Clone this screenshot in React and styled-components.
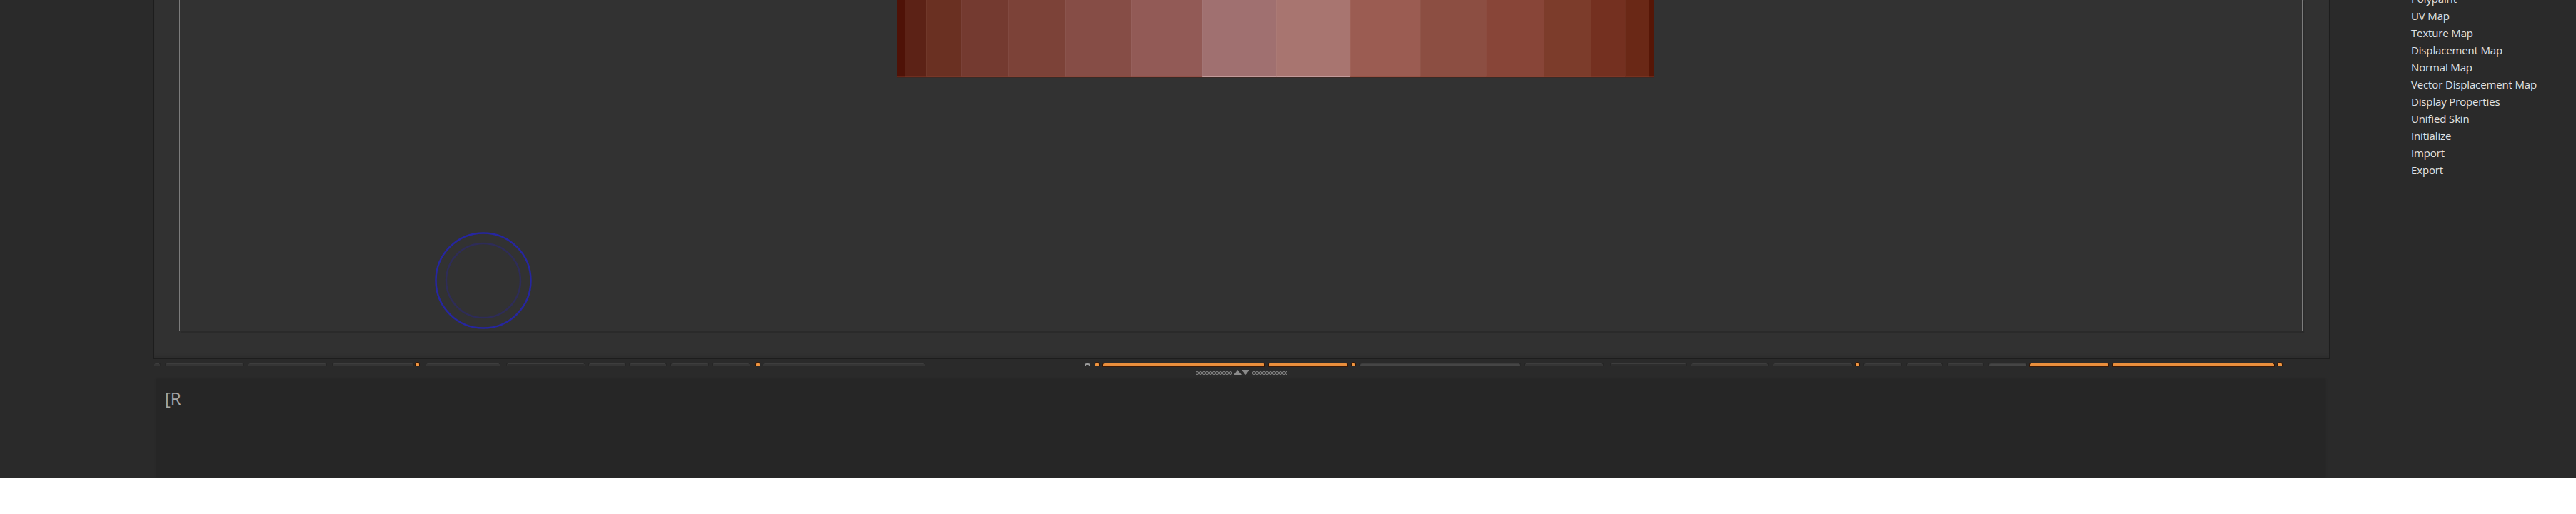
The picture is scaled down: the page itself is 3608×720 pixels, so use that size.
import React from 'react';
import styled, { createGlobalStyle } from 'styled-components';

const GlobalStyle = createGlobalStyle`
  html, body {
    margin: 0;
    padding: 0;
    background: #ffffff;
  }
  body {
    font-family: "Open Sans", "Noto Sans", "Liberation Sans", sans-serif;
  }
`;

// colour bands of the material strip, page x start / end
const bands = [
  [1256, 1267, '#4f1207'],
  [1267, 1297, '#5c2216'],
  [1297, 1346, '#6a3022'],
  [1346, 1412, '#743a30'],
  [1412, 1492, '#7c4238'],
  [1492, 1584, '#864d46'],
  [1584, 1684, '#925a56'],
  [1684, 1787, '#a07070', true],
  [1787, 1891, '#a87570', true],
  [1891, 1989, '#9b5c52'],
  [1989, 2082, '#8c4e42'],
  [2082, 2162, '#884538'],
  [2162, 2228, '#7c3c2b'],
  [2228, 2276, '#743020'],
  [2276, 2309, '#6a2816'],
  [2309, 2317, '#561606'],
];

// timeline strip under the viewport, page x start / end / kind
const segments = [
  [215, 225, 'dark'],
  [231, 342, 'dark'],
  [347, 458, 'dark'],
  [465, 580, 'dark'],
  [581, 588, 'knob'],
  [596, 701, 'dark'],
  [709, 820, 'dim'],
  [824, 877, 'dark'],
  [881, 934, 'dark'],
  [939, 993, 'dark'],
  [997, 1051, 'dark'],
  [1058, 1065, 'knob'],
  [1068, 1296, 'dark'],
  [1519, 1527, 'arrow'],
  [1533, 1540, 'knob'],
  [1544, 1772, 'orange'],
  [1776, 1888, 'orange'],
  [1892, 1899, 'knob'],
  [1904, 2130, 'light'],
  [2135, 2246, 'dark'],
  [2255, 2363, 'dim'],
  [2368, 2477, 'dark'],
  [2483, 2595, 'dark'],
  [2598, 2605, 'knob'],
  [2610, 2664, 'dark'],
  [2670, 2721, 'dark'],
  [2727, 2779, 'dark'],
  [2785, 2839, 'light'],
  [2842, 2954, 'orange'],
  [2958, 3186, 'orange'],
  [3189, 3197, 'knob'],
];

const menuItems = [
  'Polypaint',
  'UV Map',
  'Texture Map',
  'Displacement Map',
  'Normal Map',
  'Vector Displacement Map',
  'Display Properties',
  'Unified Skin',
  'Initialize',
  'Import',
  'Export',
];

export default function App() {
  let prev = 214;
  return (
    <>
      <GlobalStyle />
      <Shell>
        <LeftTray />
        <Center>
          <Viewport>
            <Frame>
              <MaterialStrip>
                {bands.map(([a, b, c, hi], i) => (
                  <Band key={i} $w={b - a} $c={c} $hi={hi} />
                ))}
              </MaterialStrip>
              <BrushCursor width="140" height="140" viewBox="0 0 140 140">
                <circle cx="70" cy="70" r="66.5" fill="none" stroke="#2626a0" strokeWidth="2.5" />
                <circle cx="70" cy="70" r="52" fill="none" stroke="#2e2c58" strokeWidth="2.5" />
              </BrushCursor>
            </Frame>
          </Viewport>
          <TimelineRow>
            <Track>
              {segments.map(([a, b, kind], i) => {
                const gap = a - prev;
                prev = b;
                if (kind === 'knob') return <Knob key={i} $gap={gap} $w={b - a} />;
                if (kind === 'arrow') return <Caret key={i} $gap={gap} $w={b - a} />;
                return <Segment key={i} $gap={gap} $w={b - a} $kind={kind} />;
              })}
            </Track>
            <Grip>
              <GripBar />
              <svg width="22" height="8" viewBox="0 0 22 8">
                <polygon points="0,7 5.5,0 11,7" fill="#8a8a8a" />
                <polygon points="11,0 22,0 16.5,7" fill="#8a8a8a" />
              </svg>
              <GripBar />
            </Grip>
          </TimelineRow>
          <NotePanel>
            <NoteText>[R</NoteText>
          </NotePanel>
        </Center>
        <RightTray>
          <MenuList>
            {menuItems.map((m) => (
              <MenuItem key={m}>{m}</MenuItem>
            ))}
          </MenuList>
        </RightTray>
      </Shell>
    </>
  );
}

const Shell = styled.div`
  width: 3608px;
  height: 669px;
  display: grid;
  grid-template-columns: 214px 3049px 1fr;
  background: #2a2a2a;
  overflow: hidden;
`;

const LeftTray = styled.div`
  background: #2a2a2a;
`;

const Center = styled.div`
  display: flex;
  flex-direction: column;
`;

const Viewport = styled.div`
  box-sizing: border-box;
  height: 503px;
  display: flex;
  padding: 0 37px 38px 36px;
  background: #313131;
  border: 1px solid #1d1d1d;
  border-top: none;
  box-shadow: inset 0 -5px 4px -3px #2b2b2b;
`;

const Frame = styled.div`
  position: relative;
  flex: 1;
  background: #323232;
  border: 1px solid #7c7c7c;
  border-top: none;
  box-shadow: 2px 2px 1px #2a2a2a;
`;

const MaterialStrip = styled.div`
  display: flex;
  margin-left: 1004px;
  width: 1061px;
  height: 108px;
  box-shadow: 0 1px 0 #3a2a26;
`;

const Band = styled.div`
  width: ${(p) => p.$w}px;
  height: 100%;
  background: ${(p) => p.$c};
  box-sizing: border-box;
  border-left: 1px solid rgba(255, 255, 255, 0.04);
  border-bottom: 2px solid ${(p) => (p.$hi ? '#c29a9a' : 'rgba(150, 70, 50, 0.35)')};
`;

const BrushCursor = styled.svg`
  position: absolute;
  left: 355px;
  top: 323px;
`;

const TimelineRow = styled.div`
  height: 27px;
  display: flex;
  flex-direction: column;
  align-items: stretch;
`;

const Track = styled.div`
  display: flex;
  align-items: flex-end;
  height: 6px;
  margin-top: 4px;
`;

const segmentColors = {
  dark: '#353535',
  dim: '#2d2d2d',
  light: '#454545',
  orange: '#e98e3c',
};

const Segment = styled.div`
  flex: none;
  margin-left: ${(p) => p.$gap}px;
  width: ${(p) => p.$w}px;
  height: 5px;
  box-sizing: border-box;
  background: ${(p) => segmentColors[p.$kind]};
  border-radius: 3px 3px 0 0;
  border: 1px solid ${(p) => (p.$kind === 'orange' ? '#2e1405' : '#262626')};
  border-bottom: none;
  box-shadow: ${(p) => (p.$kind === 'orange' ? '0 1px 0 #3a1a08' : 'inset 0 1px 0 #3d3d3d')};
`;

const Knob = styled.div`
  flex: none;
  margin-left: ${(p) => p.$gap}px;
  width: ${(p) => p.$w}px;
  height: 6px;
  box-sizing: border-box;
  background: #f0953f;
  border: 1px solid #2e1405;
  border-bottom: none;
  border-radius: 4px 4px 0 0;
`;

const Caret = styled.div`
  flex: none;
  margin-left: ${(p) => p.$gap}px;
  width: ${(p) => p.$w}px;
  height: 3px;
  margin-bottom: 1px;
  box-sizing: border-box;
  border: 2px solid #9a9a9a;
  border-bottom: none;
  border-radius: 4px 4px 0 0;
`;

const Grip = styled.div`
  display: flex;
  align-items: center;
  justify-content: center;
  gap: 3px;
  margin-top: 5px;
  height: 8px;
`;

const GripBar = styled.div`
  width: 50px;
  height: 6px;
  background: repeating-conic-gradient(#7a7a7a 0 25%, #3c3c3c 0 50%) 0 0 / 2px 2px;
`;

const NotePanel = styled.div`
  margin: 1px 6px 0 5px;
  height: 137px;
  box-sizing: border-box;
  padding: 10px 12px;
  background: #262626;
  box-shadow: 0 0 2px #242424;
`;

const NoteText = styled.div`
  font-family: "Open Sans", "Noto Sans", sans-serif;
  font-size: 24px;
  color: #a8a8a8;
`;

const RightTray = styled.div`
  background: #2a2a2a;
  padding-left: 114px;
`;

const MenuList = styled.div`
  display: flex;
  flex-direction: column;
  margin-top: -14px;
`;

const MenuItem = styled.div`
  font-family: "Open Sans", "Noto Sans", sans-serif;
  font-size: 15px;
  letter-spacing: -0.15px;
  line-height: 24px;
  color: #e2e2e2;
  white-space: nowrap;
`;
